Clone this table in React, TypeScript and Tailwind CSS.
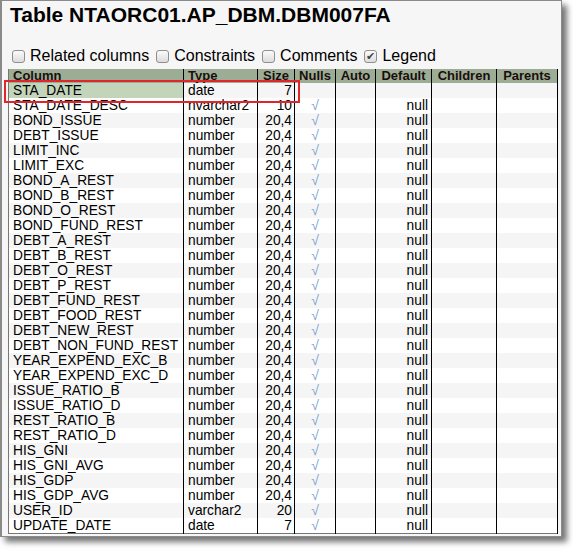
import React from 'react'

type Col = {
  name: string
  type: string
  size: string
  nulls: boolean
  def: string
}

const num = (name: string): Col => ({ name, type: 'number', size: '20,4', nulls: true, def: 'null' })

const columns: Col[] = [
  { name: 'STA_DATE', type: 'date', size: '7', nulls: false, def: '' },
  { name: 'STA_DATE_DESC', type: 'nvarchar2', size: '10', nulls: true, def: 'null' },
  num('BOND_ISSUE'),
  num('DEBT_ISSUE'),
  num('LIMIT_INC'),
  num('LIMIT_EXC'),
  num('BOND_A_REST'),
  num('BOND_B_REST'),
  num('BOND_O_REST'),
  num('BOND_FUND_REST'),
  num('DEBT_A_REST'),
  num('DEBT_B_REST'),
  num('DEBT_O_REST'),
  num('DEBT_P_REST'),
  num('DEBT_FUND_REST'),
  num('DEBT_FOOD_REST'),
  num('DEBT_NEW_REST'),
  num('DEBT_NON_FUND_REST'),
  num('YEAR_EXPEND_EXC_B'),
  num('YEAR_EXPEND_EXC_D'),
  num('ISSUE_RATIO_B'),
  num('ISSUE_RATIO_D'),
  num('REST_RATIO_B'),
  num('REST_RATIO_D'),
  num('HIS_GNI'),
  num('HIS_GNI_AVG'),
  num('HIS_GDP'),
  num('HIS_GDP_AVG'),
  { name: 'USER_ID', type: 'varchar2', size: '20', nulls: true, def: 'null' },
  { name: 'UPDATE_DATE', type: 'date', size: '7', nulls: true, def: 'null' },
]

const headers = ['Column', 'Type', 'Size', 'Nulls', 'Auto', 'Default', 'Children', 'Parents']

// old-style grey checkbox, as the legacy browser drew it
const Option = ({ label, checked }: { label: string; checked?: boolean }) => (
  <label className="flex items-center gap-[5px]">
    <span className="flex h-[13px] w-[13px] items-center justify-center rounded-[3px] border border-[#8f8f8f] bg-gradient-to-b from-[#fbfbfb] to-[#dcdcdc] text-[11px] leading-none text-[#444]">
      {checked ? '✔' : ''}
    </span>
    <span>{label}</span>
  </label>
)

export default function App() {
  return (
    <div className="h-[551px] w-[573px] bg-white font-['Liberation_Sans',Arial,sans-serif] text-black">
      <div className="relative h-[537px] w-[562px] border-t border-l-2 border-r border-b border-[#8a8a8a] bg-[#f6f6f6] shadow-[5px_5px_6px_rgba(0,0,0,0.55)]">
        <h1 className="pl-[8px] pt-[1px] text-[21px] leading-[26px] font-bold">Table NTAORC01.AP_DBM.DBM007FA</h1>

        <div className="mt-[19px] flex items-center gap-[7px] pl-[10px] text-[16px] leading-[18px]">
          <Option label="Related columns" />
          <Option label="Constraints" />
          <Option label="Comments" />
          <Option label="Legend" checked />
        </div>

        <table className="mt-[4px] ml-[6px] w-[549px] table-fixed border-collapse border-l border-b border-[#777] text-[13.75px] leading-[15px]">
          <colgroup>
            <col className="w-[175px]" />
            <col className="w-[74px]" />
            <col className="w-[37px]" />
            <col className="w-[41px]" />
            <col className="w-[40px]" />
            <col className="w-[56px]" />
            <col className="w-[65px]" />
            <col className="w-[61px]" />
          </colgroup>
          <thead>
            <tr className="h-[14px] bg-[#9dad95]">
              {headers.map((h, i) => (
                <th
                  key={h}
                  className={`h-[14px] overflow-hidden border-r border-black px-[4px] text-[13px] leading-[14px] font-bold whitespace-nowrap text-[#1a0d0d] ${
                    i < 2 ? 'text-left' : 'text-center'
                  }`}
                >
                  {h}
                </th>
              ))}
            </tr>
          </thead>
          <tbody>
            {columns.map((c, i) => (
              <tr key={c.name} className={i % 2 === 0 ? 'bg-[#f5f5f5]' : 'bg-white'}>
                <td className={`h-[15px] border-r border-black pl-[4px] whitespace-nowrap ${i === 0 ? 'bg-[#c2d5ba]' : ''}`}>{c.name}</td>
                <td className="border-r border-black pl-[4px]">{c.type}</td>
                <td className="border-r border-black pr-[2px] text-right">{c.size}</td>
                <td className="border-r border-black text-center text-[14px] text-[#7aa4d4]">{c.nulls ? '√' : ''}</td>
                <td className="border-r border-black"></td>
                <td className="border-r border-black pr-[3px] text-right">{c.def}</td>
                <td className="border-r border-black"></td>
                <td className="border-r border-black"></td>
              </tr>
            ))}
          </tbody>
        </table>

        <div className="pointer-events-none absolute top-[79px] left-[2px] h-[23px] w-[296px] border-2 border-[#e0262b]"></div>
      </div>
    </div>
  )
}
